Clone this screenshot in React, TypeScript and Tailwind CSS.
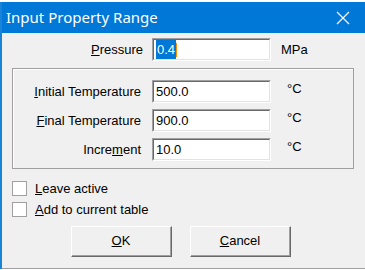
import { ReactNode } from "react";

const sunken =
  "bg-white border-t-[1px] border-l-[1px] border-b-[1px] border-r-[1px] border-t-[#a0a0a0] border-l-[#a0a0a0] border-b-white border-r-white";

function Field({ children, width = "w-[119px]" }: { children: ReactNode; width?: string }) {
  return (
    <div className={`${sunken} ${width} h-[23px]`}>
      <div className="h-full border-t border-l border-t-[#696969] border-l-[#696969] border-b border-r border-b-[#e3e3e3] border-r-[#e3e3e3] flex items-center pl-[2px] text-[13px] text-black">
        {children}
      </div>
    </div>
  );
}

function Row({ label, value }: { label: ReactNode; value: string }) {
  return (
    <div className="flex items-center h-[23px]">
      <div className="w-[127px] text-right text-[13px]">{label}</div>
      <div className="ml-[11px]">
        <Field>{value}</Field>
      </div>
      <div className="ml-[16px] text-[13px] -mt-[5px]">°C</div>
    </div>
  );
}

function Check({ label }: { label: ReactNode }) {
  return (
    <div className="flex items-center h-[15px] ml-[11px]">
      <div className="w-[15px] h-[15px] bg-white border border-[#a0a0a0]" />
      <span className="ml-[8px] text-[13px]">{label}</span>
    </div>
  );
}

function Btn({ label }: { label: ReactNode }) {
  return (
    <div className="w-[101px] h-[31px] border-t border-l border-t-white border-l-white border-b border-r border-b-[#696969] border-r-[#696969]">
      <div className="h-full border-b border-r border-b-[#a0a0a0] border-r-[#a0a0a0] flex items-center justify-center text-[13px]">
        {label}
      </div>
    </div>
  );
}

export default function App() {
  return (
    <div
      className="w-[365px] h-[270px] bg-white overflow-hidden text-black"
      style={{ fontFamily: '"Liberation Sans", Arial, sans-serif' }}
    >
      <div className="h-[2px] bg-white" />
      <div className="border-l-2 border-[#1883d7] h-[267px] flex flex-col">
        {/* Title bar */}
        <div className="h-[31px] bg-[#0078d7] flex items-center justify-between pl-[4px] pr-[15px]">
          <span
            className="text-white text-[15px] leading-none"
            style={{ fontFamily: '"Noto Sans", "Open Sans", sans-serif' }}
          >
            Input Property Range
          </span>
          <svg width="14" height="14" viewBox="0 0 14 14">
            <path d="M1 1 L13 13 M13 1 L1 13" stroke="white" strokeWidth="1.2" />
          </svg>
        </div>

        {/* Body */}
        <div className="flex-1 bg-[#f0f0f0] border-b border-[#a0a0a0] flex flex-col">
          <div className="flex items-center h-[23px] mt-[5px]">
            <div className="w-[141px] text-right text-[13px]">
              <u>P</u>ressure
            </div>
            <div className="ml-[9px]">
              <Field>
                <span className="bg-[#0078d7] text-white px-[1px]">0.4</span>
                <span className="w-[1px] h-[14px] bg-[#ff8c00]" />
              </Field>
            </div>
            <div className="ml-[10px] text-[13px]">MPa</div>
          </div>

          <div className="ml-[10px] mt-[7px] w-[342px] h-[101px] border border-[#a0a0a0]">
            <div className="h-full border-t border-l border-white flex flex-col gap-[6px] pt-[10px]">
              <Row label={<><u>I</u>nitial Temperature</>} value="500.0" />
              <Row label={<><u>F</u>inal Temperature</>} value="900.0" />
              <Row label={<>Incre<u>m</u>ent</>} value="10.0" />
            </div>
          </div>

          <div className="mt-[12px] flex flex-col gap-[6px] -ml-[1px]">
            <Check label={<><u>L</u>eave active</>} />
            <Check label={<><u>A</u>dd to current table</>} />
          </div>

          <div className="mt-[9px] flex ml-[69px] gap-[18px]">
            <Btn label={<><u>O</u>K</>} />
            <Btn label={<><u>C</u>ancel</>} />
          </div>
        </div>
      </div>
    </div>
  );
}
